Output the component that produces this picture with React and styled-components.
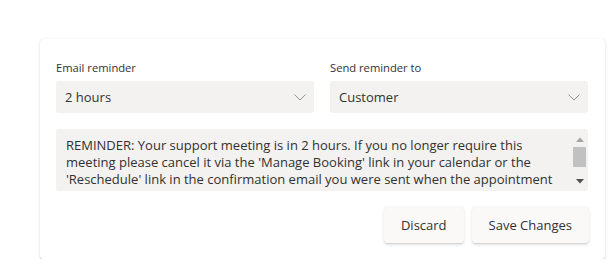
import React from "react";
import styled, { createGlobalStyle } from "styled-components";

const GlobalStyle = createGlobalStyle`
  html, body { margin: 0; background: #ffffff; }
  * { box-sizing: border-box; }
`;

const Page = styled.div`
  padding: 39px 0 0 40px;
  font-family: "Open Sans", "Noto Sans", sans-serif;
  color: #323130;
`;

const Card = styled.div`
  width: 565px;
  background: #ffffff;
  border-radius: 4px;
  box-shadow: 0 1.6px 3.6px rgba(0, 0, 0, 0.12), 0 0.3px 0.9px rgba(0, 0, 0, 0.1);
  padding: 21px 17px 16px 16px;
  display: flex;
  flex-direction: column;
  gap: 16px;
`;

const FieldRow = styled.div`
  display: grid;
  grid-template-columns: 1fr 1fr;
  column-gap: 16px;
`;

const Field = styled.div`
  display: flex;
  flex-direction: column;
  gap: 5px;
`;

const Label = styled.label`
  font-size: 11.2px;
  line-height: 16px;
  color: #323130;
`;

const Select = styled.div`
  height: 32px;
  background: #f3f2f1;
  border-radius: 3px;
  display: flex;
  align-items: center;
  justify-content: space-between;
  padding: 0 8px 0 9px;
  font-size: 13px;
  color: #323130;
`;

const Chevron = () => (
  <svg width="12" height="7" viewBox="0 0 12 7" fill="none">
    <path d="M0.5 0.6 L6 6 L11.5 0.6" stroke="#8a8886" strokeWidth="0.9" />
  </svg>
);

const TextBox = styled.div`
  height: 62px;
  background: #f3f2f1;
  border-radius: 3px;
  display: flex;
  padding-right: 2px;
`;

const TextBody = styled.div`
  flex: 1;
  padding: 8px 2px 0 10px;
`;

const TextClip = styled.div`
  height: 51px;
  overflow: hidden;
  font-size: 13px;
  line-height: 17px;
  color: #323130;
`;

const ScrollTrack = styled.div`
  width: 13px;
  margin: 2px 0;
  display: flex;
  flex-direction: column;
`;

const ScrollButton = styled.div`
  height: 16px;
  display: flex;
  align-items: center;
  justify-content: center;
`;

const Thumb = styled.div`
  height: 20px;
  background: #c1c1c1;
`;

const Spacer = styled.div`
  flex: 1;
`;

const Arrow = ({ up, color }) => (
  <svg width="8" height="5" viewBox="0 0 8 5">
    <path d={up ? "M0 5 L4 0.5 L8 5 Z" : "M0 0 L8 0 L4 4.5 Z"} fill={color} />
  </svg>
);

const Actions = styled.div`
  display: flex;
  justify-content: flex-end;
  gap: 8px;
  margin-right: -1px;
`;

const Button = styled.button`
  height: 36px;
  padding: 0 ${(p) => p.$pad}px;
  border: none;
  border-radius: 4px;
  background: #faf9f8;
  box-shadow: 0 1.6px 3.6px rgba(0, 0, 0, 0.11), 0 0.3px 0.9px rgba(0, 0, 0, 0.09);
  font-family: "Open Sans", "Noto Sans", sans-serif;
  font-size: 13px;
  color: #323130;
`;

const message =
  "REMINDER: Your support meeting is in 2 hours. If you no longer require this meeting please cancel it via the 'Manage Booking' link in your calendar or the 'Reschedule' link in the confirmation email you were sent when the appointment";

export default function App() {
  return (
    <Page>
      <GlobalStyle />
      <Card>
        <FieldRow>
          <Field>
            <Label>Email reminder</Label>
            <Select>
              <span>2 hours</span>
              <Chevron />
            </Select>
          </Field>
          <Field>
            <Label>Send reminder to</Label>
            <Select>
              <span>Customer</span>
              <Chevron />
            </Select>
          </Field>
        </FieldRow>
        <TextBox>
          <TextBody>
            <TextClip>{message}</TextClip>
          </TextBody>
          <ScrollTrack>
            <ScrollButton>
              <Arrow up color="#a3a3a3" />
            </ScrollButton>
            <Thumb />
            <Spacer />
            <ScrollButton>
              <Arrow color="#505050" />
            </ScrollButton>
          </ScrollTrack>
        </TextBox>
        <Actions>
          <Button $pad={17}>Discard</Button>
          <Button $pad={17}>Save Changes</Button>
        </Actions>
      </Card>
    </Page>
  );
}
